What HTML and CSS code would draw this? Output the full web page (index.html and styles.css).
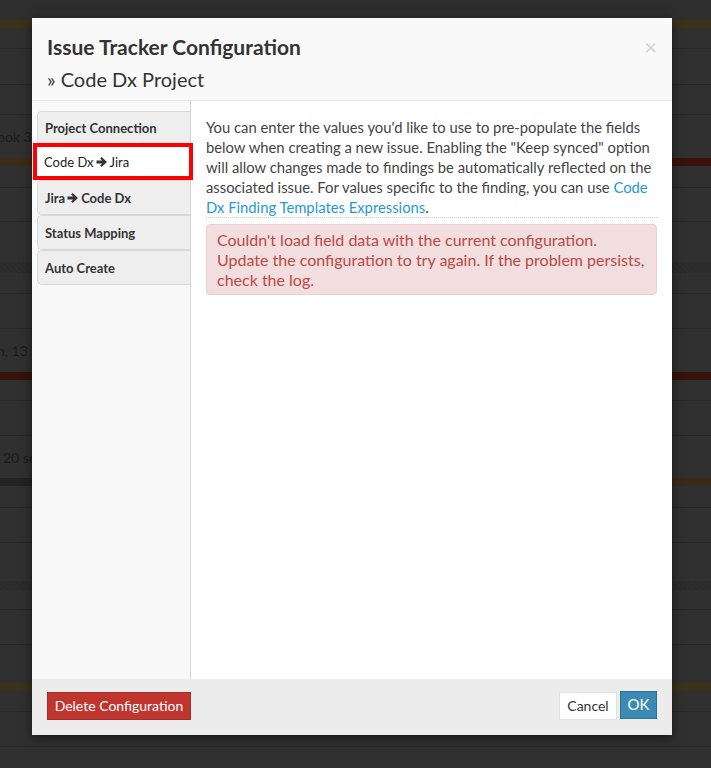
FILE: index.html
```html
<!DOCTYPE html>
<html>
<head>
<meta charset="utf-8">
<title>Issue Tracker Configuration</title>
<link rel="stylesheet" href="styles.css">
</head>
<body>
<div class="page">
  <div class="blk h20"></div>
  <div class="stripe yellow"></div>
  <div class="row r21 line"></div>
  <div class="row r36 line"></div>
  <div class="row r30 line"></div>
  <div class="row r43 txt"><span class="bgtext t1">ook 3</span></div>
  <div class="stripe brownred"></div>
  <div class="row r22 line"></div>
  <div class="row r34 line"></div>
  <div class="row r40"></div>
  <div class="stripe checker s11"></div>
  <div class="row r21 line"></div>
  <div class="row r35 line"></div>
  <div class="row r43 txt"><span class="bgtext t2">n, 13 s</span></div>
  <div class="stripe red"></div>
  <div class="row r21 line"></div>
  <div class="row r35 line"></div>
  <div class="row r42 txt"><span class="bgtext t3">20 se</span></div>
  <div class="stripe darkbrown"></div>
  <div class="row r22 line"></div>
  <div class="row r35 line"></div>
  <div class="row r38"></div>
  <div class="stripe checker s9"></div>
  <div class="row r20 line"></div>
  <div class="row r35 line"></div>
  <div class="row r38"></div>
  <div class="stripe yellow"></div>
  <div class="row r21 line"></div>
  <div class="row r35 line"></div>
  <div class="row r21"></div>
</div>

<div class="modal">
  <div class="modal-header">
    <div class="titles">
      <h3 class="title">Issue Tracker Configuration</h3>
      <div class="subtitle">» Code Dx Project</div>
    </div>
    <span class="close">×</span>
  </div>
  <div class="modal-body">
    <div class="nav">
      <div class="tab">Project Connection</div>
      <div class="tab active">Code Dx<svg class="arrow" viewBox="0 0 12 12" width="12" height="12"><path d="M0.5 4.6H6.2L4.1 2.5L5.6 1L11 6L5.6 11L4.1 9.5L6.2 7.4H0.5Z"/></svg> Jira</div>
      <div class="tab">Jira<svg class="arrow" viewBox="0 0 12 12" width="12" height="12"><path d="M0.5 4.6H6.2L4.1 2.5L5.6 1L11 6L5.6 11L4.1 9.5L6.2 7.4H0.5Z"/></svg> Code Dx</div>
      <div class="tab">Status Mapping</div>
      <div class="tab">Auto Create</div>
    </div>
    <div class="content">
      <p class="intro">You can enter the values you'd like to use to pre-populate the fields below when creating a new issue. Enabling the "Keep synced" option will allow changes made to findings be automatically reflected on the associated issue. For values specific to the finding, you can use <a href="#" class="link">Code Dx Finding Templates Expressions</a>.</p>
      <div class="alert">Couldn't load field data with the current configuration. Update the configuration to try again. If the problem persists, check the log.</div>
    </div>
  </div>
  <div class="modal-footer">
    <button class="btn btn-danger">Delete Configuration</button>
    <div class="right-btns">
      <button class="btn btn-default">Cancel</button>
      <button class="btn btn-primary">OK</button>
    </div>
  </div>
</div>
</body>
</html>
```

FILE: styles.css
```css
html, body {
  margin: 0;
  padding: 0;
  height: 768px;
  overflow: hidden;
  background: #303030;
  font-family: Lato, "Open Sans", "Liberation Sans", sans-serif;
}

.page {
  display: flex;
  flex-direction: column;
  width: 100%;
}

.blk.h20 { height: 20px; background: #2e2e2e; }

.row {
  background: #303030;
  box-sizing: border-box;
  display: flex;
  align-items: center;
}
.row.line { border-bottom: 1px solid #282828; }
.r20 { height: 20px; }
.r21 { height: 21px; }
.r22 { height: 22px; }
.r30 { height: 30px; }
.r34 { height: 34px; }
.r35 { height: 35px; }
.r36 { height: 36px; }
.r38 { height: 38px; }
.r40 { height: 40px; }
.r42 { height: 42px; }
.r43 { height: 43px; }

.stripe { height: 8px; }
.stripe.yellow { background: #3a3219; }
.stripe.brownred { background: linear-gradient(90deg, #3a2c18 0 50%, #3a120d 50%); }
.stripe.red { background: #3a120d; }
.stripe.darkbrown { background: linear-gradient(90deg, #232323 0 50%, #3a2a18 50%); }
.stripe.checker {
  background-color: #2c2c2c;
  background-image: repeating-linear-gradient(45deg, #2b2b2b 0 2px, #2d2d2d 2px 4px);
}
.stripe.s11 { height: 11px; }
.stripe.s9 { height: 9px; }

.bgtext {
  color: #1c1c1c;
  font-size: 14px;
  white-space: nowrap;
}
.t1 { margin-left: -3px; }
.t2 { margin-left: -3px; }
.t3 { margin-left: 3px; }

/* Modal overlay */
.modal {
  position: absolute;
  left: 32px;
  top: 18px;
  width: 640px;
  height: 717px;
  display: flex;
  flex-direction: column;
  background: #fff;
  box-shadow: 0 3px 10px rgba(0, 0, 0, 0.55);
  color: #333;
}

.modal-header {
  height: 83px;
  box-sizing: border-box;
  background: #f9f9f9;
  border-bottom: 1px solid #e6e6e6;
  padding: 17px 15px 0 15px;
  display: flex;
  justify-content: space-between;
  align-items: flex-start;
}
.title {
  margin: 0;
  font-size: 21px;
  font-weight: 700;
  line-height: 24px;
  color: #333;
}
.subtitle {
  margin-top: 8px;
  font-size: 20px;
  line-height: 24px;
  color: #333;
}
.close {
  font-size: 22px;
  line-height: 16px;
  color: #d2d2d2;
  margin-top: 4px;
  margin-right: 0;
}

.modal-body {
  flex: 1;
  display: flex;
  min-height: 0;
}

.nav {
  width: 158px;
  background: #f9f9f9;
  border-right: 1px solid #d6d6d6;
  padding-top: 10px;
  display: flex;
  flex-direction: column;
}
.tab {
  margin-left: 5px;
  height: 35px;
  box-sizing: border-box;
  background: #eeeeee;
  border: 1px solid #d8d8d8;
  border-right: none;
  border-radius: 5px 0 0 5px;
  padding-left: 7px;
  display: flex;
  align-items: center;
  font-size: 13px;
  font-weight: 700;
  color: #333;
  white-space: nowrap;
}
.tab:first-child { height: 34px; }
.tab.active {
  position: relative;
  z-index: 1;
  margin-left: 1px;
  margin-right: -3px;
  margin-top: -2px;
  height: 37px;
  background: #fff;
  border: 4px solid #ff0000;
  border-radius: 0;
  padding-left: 7px;
  font-weight: 400;
  color: #222;
}
.arrow {
  fill: #333;
  margin: 0 2px 0 2px;
}

.content {
  flex: 1;
  padding: 16px 15px 0 15px;
  background: #fff;
}
.intro {
  margin: 0;
  font-size: 14.8px;
  line-height: 20px;
  color: #444;
  border-bottom: 1px dotted #c8c8c8;
  padding-bottom: 0;
}
.link {
  color: #1f9ad6;
  text-decoration: none;
}
.alert {
  margin-top: 6px;
  background: #f2dede;
  border: 1px solid #ebd0d3;
  border-radius: 4px;
  padding: 5px 10px 4px 10px;
  font-size: 16px;
  line-height: 20px;
  color: #b94a48;
}

.modal-footer {
  height: 56px;
  box-sizing: border-box;
  background: #ececec;
  padding: 13px 15px 0 15px;
  display: flex;
  justify-content: space-between;
  align-items: flex-start;
}
.right-btns {
  display: flex;
  gap: 3px;
}
.btn {
  font-family: Lato, "Open Sans", "Liberation Sans", sans-serif;
  height: 28px;
  box-sizing: border-box;
  border-radius: 0;
  font-size: 14px;
  padding: 0 0 2px 0;
  white-space: nowrap;
  cursor: pointer;
}
.btn-danger {
  background: #c1352f;
  border: 1px solid #a0302b;
  color: #fff;
  width: 144px;
}
.btn-default {
  background: #fff;
  border: 1px solid #e0e0e0;
  color: #333;
  width: 58px;
}
.btn-primary {
  background: #3b8ab4;
  border: 1px solid #2e6f92;
  color: #fff;
  width: 37px;
  font-size: 15px;
  margin-top: -1px;
}
```
